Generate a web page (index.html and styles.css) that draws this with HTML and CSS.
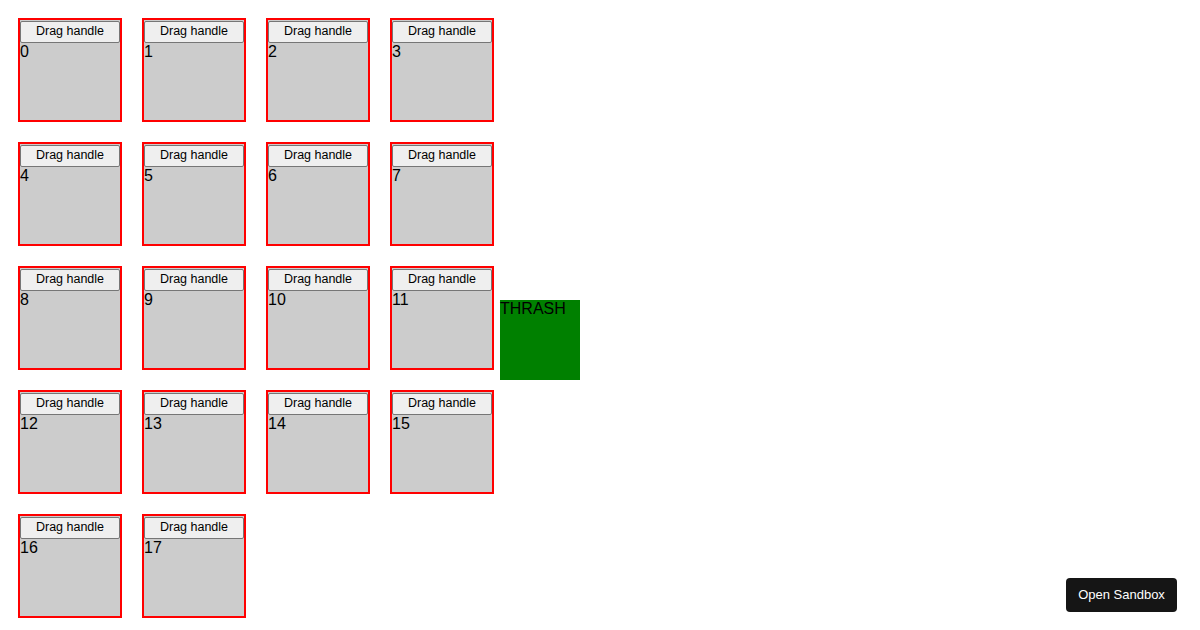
FILE: index.html
```html
<!DOCTYPE html>
<html>
<head>
<meta charset="utf-8">
<link rel="stylesheet" href="styles.css">
</head>
<body>
<div class="page">
  <div class="grid">
    <div class="card"><button class="handle">Drag handle</button><div class="num">0</div></div>
    <div class="card"><button class="handle">Drag handle</button><div class="num">1</div></div>
    <div class="card"><button class="handle">Drag handle</button><div class="num">2</div></div>
    <div class="card"><button class="handle">Drag handle</button><div class="num">3</div></div>
    <div class="card"><button class="handle">Drag handle</button><div class="num">4</div></div>
    <div class="card"><button class="handle">Drag handle</button><div class="num">5</div></div>
    <div class="card"><button class="handle">Drag handle</button><div class="num">6</div></div>
    <div class="card"><button class="handle">Drag handle</button><div class="num">7</div></div>
    <div class="card"><button class="handle">Drag handle</button><div class="num">8</div></div>
    <div class="card"><button class="handle">Drag handle</button><div class="num">9</div></div>
    <div class="card"><button class="handle">Drag handle</button><div class="num">10</div></div>
    <div class="card"><button class="handle">Drag handle</button><div class="num">11</div></div>
    <div class="card"><button class="handle">Drag handle</button><div class="num">12</div></div>
    <div class="card"><button class="handle">Drag handle</button><div class="num">13</div></div>
    <div class="card"><button class="handle">Drag handle</button><div class="num">14</div></div>
    <div class="card"><button class="handle">Drag handle</button><div class="num">15</div></div>
    <div class="card"><button class="handle">Drag handle</button><div class="num">16</div></div>
    <div class="card"><button class="handle">Drag handle</button><div class="num">17</div></div>
  </div>
  <div class="thrash">THRASH</div>
</div>
<button class="sandbox">Open Sandbox</button>
</body>
</html>
```
FILE: styles.css
```css
html, body {
  margin: 0;
  padding: 0;
  background: #ffffff;
  font-family: "Liberation Sans", Arial, sans-serif;
  font-size: 16px;
  color: #000;
}
.page {
  display: flex;
  align-items: flex-start;
  padding: 7.5px 0 0 8px;
}
.grid {
  display: grid;
  grid-template-columns: repeat(4, 104px);
  column-gap: 20px;
  row-gap: 20px;
  padding: 10px 6px 10px 10px;
}
.card {
  box-sizing: border-box;
  width: 104px;
  height: 104px;
  border: 2px solid #ff0000;
  background: #cccccc;
  display: flex;
  flex-direction: column;
  align-items: center;
}
.handle {
  box-sizing: border-box;
  width: 100px;
  height: 22px;
  margin: 1px 0 0 0;
  padding: 0 0 2px 0;
  font-family: "Liberation Sans", Arial, sans-serif;
  font-size: 12.5px;
  color: #000;
  background: #efefef;
  border: 1px solid #767676;
  border-radius: 2px;
}
.num {
  align-self: stretch;
  font-size: 16px;
  line-height: 18px;
  text-align: left;
}
.thrash {
  width: 80px;
  height: 80px;
  margin-top: 292.5px;
  background: #008000;
  font-size: 16px;
  line-height: 18px;
}
.sandbox {
  position: fixed;
  right: 23px;
  bottom: 18px;
  width: 111px;
  height: 34px;
  padding: 0 0 2px 0;
  border: none;
  border-radius: 4px;
  background: #151515;
  color: #ffffff;
  font-family: "Liberation Sans", Arial, sans-serif;
  font-size: 13px;
}
```
